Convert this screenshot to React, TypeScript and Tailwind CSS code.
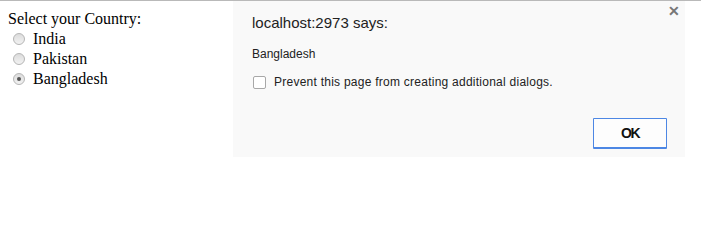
import React from "react";

function Radio({ checked }: { checked?: boolean }) {
  return (
    <span className="relative ml-[5px] mr-[8px] inline-block h-[12px] w-[12px] rounded-full border border-[#b5b5b5] bg-[linear-gradient(#dcdcdc,#f2f2f2)]">
      {checked && (
        <span className="absolute left-[3px] top-[3px] h-[4px] w-[4px] rounded-full bg-[#555]" />
      )}
    </span>
  );
}

export default function App() {
  const serif = { fontFamily: '"Liberation Serif", "Times New Roman", serif' };
  return (
    <div className="relative h-[233px] w-[701px] overflow-hidden bg-white">
      <div className="h-px w-full bg-[#b9b9b9]" />
      <div className="px-2 pt-[9px] text-[16px] leading-[18px] text-black" style={serif}>
        <div className="h-[19px]">Select your Country:</div>
        {[
          ["India", false],
          ["Pakistan", false],
          ["Bangladesh", true],
        ].map(([label, checked]) => (
          <div key={label as string} className="flex h-[20px] items-center">
            <Radio checked={checked as boolean} />
            <span>{label as string}</span>
          </div>
        ))}
      </div>

      <div
        className="absolute left-[233px] top-px h-[156px] w-[452px] bg-[#f9f9f9]"
        style={{ fontFamily: '"Liberation Sans", Arial, sans-serif' }}
      >
        <span className="absolute right-[5px] top-[3px] text-[14px] font-bold leading-none text-[#777]">✕</span>
        <div className="flex flex-col pl-[19px] pr-[18px] pt-[13px]">
          <div className="text-[15px] leading-[18px] text-[#222]">localhost:2973 says:</div>
          <div className="mt-[15px] text-[12px] leading-[14px] text-[#222]">Bangladesh</div>
          <div className="mt-[14px] flex items-center">
            <span className="ml-px mr-[8px] inline-block h-[13px] w-[13px] rounded-[2px] border border-[#a8a8a8] bg-white" />
            <span className="text-[12px] leading-[14px] tracking-[0.25px] text-[#222]">Prevent this page from creating additional dialogs.</span>
          </div>
          <div className="mt-[29px] flex justify-end">
            <button className="h-[31px] w-[74px] rounded-[1px] border border-b-2 border-[#4d87e4] bg-[#fdfdfd] pt-px text-[14px] font-bold tracking-[-1.5px] text-[#111]">
              OK
            </button>
          </div>
        </div>
      </div>
    </div>
  );
}
